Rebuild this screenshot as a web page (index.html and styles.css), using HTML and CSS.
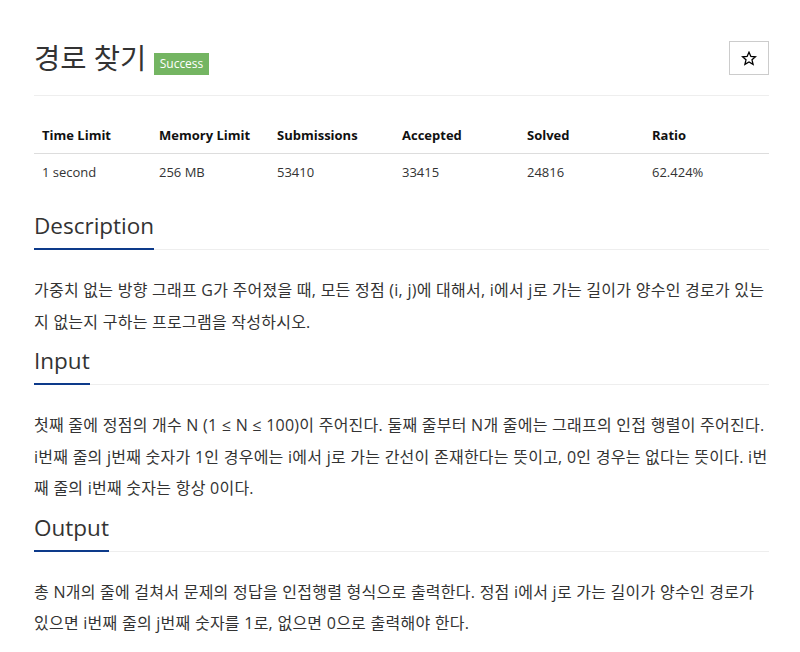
FILE: index.html
```html
<!DOCTYPE html>
<html lang="ko">
<head>
<meta charset="utf-8">
<title>경로 찾기</title>
<link rel="stylesheet" href="styles.css">
</head>
<body>
<div class="container">
  <div class="page-header">
    <h1 class="title">경로 찾기 <span class="label">Success</span></h1>
    <button class="star-btn" type="button" aria-label="star">
      <svg width="16" height="15" viewBox="0 0 16 15" aria-hidden="true"><path d="M8 1.2 L9.9 5.4 L14.5 5.8 L11 8.8 L12.1 13.4 L8 11 L3.9 13.4 L5 8.8 L1.5 5.8 L6.1 5.4 Z" fill="none" stroke="#000" stroke-width="1.3" stroke-linejoin="miter"/></svg>
    </button>
  </div>

  <table class="info">
    <thead>
      <tr>
        <th class="c1">Time Limit</th>
        <th class="c2">Memory Limit</th>
        <th class="c3">Submissions</th>
        <th class="c4">Accepted</th>
        <th class="c5">Solved</th>
        <th>Ratio</th>
      </tr>
    </thead>
    <tbody>
      <tr>
        <td>1 second</td>
        <td>256 MB</td>
        <td>53410</td>
        <td>33415</td>
        <td>24816</td>
        <td>62.424%</td>
      </tr>
    </tbody>
  </table>

  <section class="section first">
    <h2 class="headline"><span>Description</span></h2>
    <p class="text">가중치 없는 방향 그래프 G가 주어졌을 때, 모든 정점 (i, j)에 대해서, i에서 j로 가는 길이가 양수인 경로가 있는지 없는지 구하는 프로그램을 작성하시오.</p>
  </section>

  <section class="section">
    <h2 class="headline"><span>Input</span></h2>
    <p class="text">첫째 줄에 정점의 개수 N (1 ≤ N ≤ 100)이 주어진다. 둘째 줄부터 N개 줄에는 그래프의 인접 행렬이 주어진다. i번째 줄의 j번째 숫자가 1인 경우에는 i에서 j로 가는 간선이 존재한다는 뜻이고, 0인 경우는 없다는 뜻이다. i번째 줄의 i번째 숫자는 항상 0이다.</p>
  </section>

  <section class="section">
    <h2 class="headline"><span>Output</span></h2>
    <p class="text">총 N개의 줄에 걸쳐서 문제의 정답을 인접행렬 형식으로 출력한다. 정점 i에서 j로 가는 길이가 양수인 경로가 있으면 i번째 줄의 j번째 숫자를 1로, 없으면 0으로 출력해야 한다.</p>
  </section>
</div>
</body>
</html>
```

FILE: styles.css
```css
* { box-sizing: border-box; }

body {
  margin: 0;
  background: #fff;
  color: #333;
  font-family: "Open Sans", "Noto Sans CJK KR", sans-serif;
}

.container {
  padding: 0 31px 0 34px;
}

.page-header {
  display: flex;
  align-items: flex-end;
  justify-content: space-between;
  padding: 41px 0 20px;
  border-bottom: 1px solid #eee;
}

.title {
  margin: 0;
  font-size: 28.5px;
  font-weight: 400;
  line-height: 29px;
  color: #333;
}

.label {
  display: inline-block;
  vertical-align: 1px;
  background: #74b562;
  color: #fff;
  font-size: 12px;
  line-height: 16px;
  padding: 3px 6px;
  font-weight: 400;
}

.star-btn {
  display: flex;
  align-items: center;
  justify-content: center;
  width: 40px;
  height: 34px;
  border: 1px solid #ccc;
  background: #fff;
  padding: 0;
}

.info {
  width: 100%;
  border-collapse: collapse;
  margin-top: 21px;
  font-size: 13px;
}

.info th,
.info td {
  text-align: left;
  padding: 8px;
  line-height: 20px;
}

.info th {
  font-weight: 700;
  border-bottom: 1px solid #ddd;
  color: #111;
}

.info td { color: #333; }

.c1 { width: 117px; }
.c2 { width: 118px; }
.c3 { width: 125px; }
.c4 { width: 125px; }
.c5 { width: 125px; }

.section { margin-top: 7px; }
.section.first { margin-top: 20px; }

.headline {
  margin: 0;
  font-size: 22.5px;
  font-weight: 400;
  line-height: 32px;
  border-bottom: 1px solid #eee;
}

.headline span {
  display: inline-block;
  padding-bottom: 6px;
  margin-bottom: -1px;
  border-bottom: 2px solid #0d3a8a;
}

.text {
  margin: 25px 0 0;
  font-size: 16px;
  line-height: 31.5px;
  letter-spacing: 0.25px;
  color: #333;
}
```
